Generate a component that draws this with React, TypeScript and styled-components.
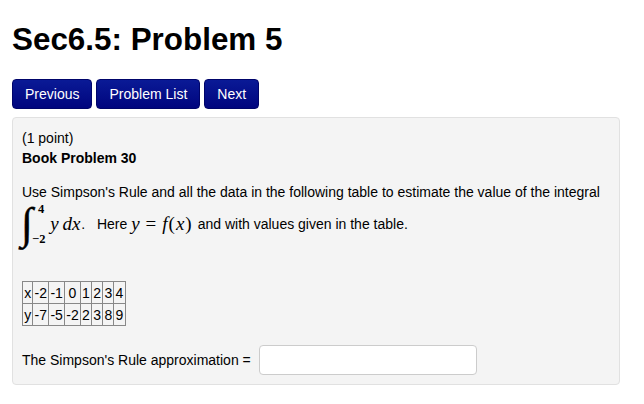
import styled, { createGlobalStyle } from "styled-components";

const GlobalStyle = createGlobalStyle`
  body {
    margin: 0;
    background: #fff;
    font-family: "Liberation Sans", Arial, sans-serif;
    color: #000;
  }
`;

const Page = styled.div`
  padding: 0 24px 0 12px;
`;

const Title = styled.h1`
  margin: 0;
  padding-top: 21px;
  font-size: 31.4px;
  line-height: 38px;
  font-weight: bold;
`;

const NavRow = styled.div`
  display: flex;
  gap: 4px;
  margin-top: 20px;
`;

const NavButton = styled.button`
  height: 30px;
  padding: 0 12px;
  border: 1px solid #00046a;
  border-radius: 4px;
  background: linear-gradient(#0a1a96, #00057e);
  color: #fff;
  font-family: "Liberation Sans", Arial, sans-serif;
  font-size: 14px;
  cursor: pointer;
`;

const ProblemPanel = styled.div`
  margin-top: 8px;
  width: 608px;
  box-sizing: border-box;
  height: 268px;
  padding: 10px 9px;
  background: #f4f4f4;
  border: 1px solid #e1e1e1;
  border-radius: 4px;
  font-size: 14px;
  line-height: 20px;
`;

const Line = styled.div<{ $bold?: boolean }>`
  font-weight: ${(p) => (p.$bold ? "bold" : "normal")};
`;

const Para = styled.p`
  margin: 14px 0 0;
`;

const MathRow = styled.div`
  display: flex;
  align-items: center;
  margin-top: -1px;
`;

const Integral = styled.span`
  display: inline-flex;
  align-items: center;
  font-family: "Liberation Serif", "DejaVu Serif", serif;
`;

const Sign = styled.span`
  font-size: 44px;
  line-height: 46px;
  font-style: italic;
  -webkit-text-stroke: 0.4px #000;
  margin-left: -1px;
`;

const Limits = styled.span`
  display: inline-flex;
  flex-direction: column;
  justify-content: space-between;
  height: 42px;
  font-size: 12.5px;
  line-height: 12px;
  font-weight: bold;
`;

const Upper = styled.span`
  margin-left: 5px;
`;

const Lower = styled.span`
  margin-left: -1px;
`;

const MathText = styled.span<{ $gap?: number }>`
  font-family: "Liberation Serif", "DejaVu Serif", serif;
  font-style: italic;
  font-size: 19px;
  margin-right: ${(p) => p.$gap ?? 0}px;
`;

const Upright = styled.span<{ $pad?: number }>`
  font-style: normal;
  padding: 0 ${(p) => p.$pad ?? 0}px;
`;

const DataTable = styled.table`
  margin-top: 34px;
  border-collapse: collapse;
  border: 1px solid #333;
  font-size: 14px;
  line-height: 16px;
  td {
    height: 22px;
    box-sizing: border-box;
    border: 1px solid #888;
    padding: 0 1.2px;
    text-align: center;
  }
`;

const AnswerRow = styled.div`
  display: flex;
  align-items: center;
  gap: 8px;
  margin-top: 19px;
`;

const AnswerInput = styled.input`
  width: 218px;
  height: 30px;
  box-sizing: border-box;
  border: 1px solid #ccc;
  border-radius: 4px;
  background: #fff;
`;

const xs = ["x", "-2", "-1", "0", "1", "2", "3", "4"];
const ys = ["y", "-7", "-5", "-2", "2", "3", "8", "9"];

export default function App() {
  return (
    <Page>
      <GlobalStyle />
      <Title>Sec6.5: Problem 5</Title>
      <NavRow>
        <NavButton>Previous</NavButton>
        <NavButton>Problem List</NavButton>
        <NavButton>Next</NavButton>
      </NavRow>
      <ProblemPanel>
        <Line>(1 point)</Line>
        <Line $bold>Book Problem 30</Line>
        <Para>
          Use Simpson's Rule and all the data in the following table to estimate the value of the integral
        </Para>
        <MathRow>
          <Integral>
            <Sign>∫</Sign>
            <Limits>
              <Upper>4</Upper>
              <Lower>−2</Lower>
            </Limits>
          </Integral>
          <MathText $gap={1}>&nbsp;y&thinsp;dx</MathText>
          <span>.&nbsp;&nbsp;&nbsp;Here&nbsp;</span>
          <MathText $gap={5}>
            y<Upright $pad={6}>=</Upright>f<Upright $pad={1}>(</Upright>x<Upright $pad={1}>)</Upright>
          </MathText>
          <span>and with values given in the table.</span>
        </MathRow>
        <DataTable>
          <tbody>
            <tr>
              {xs.map((v, i) => (
                <td key={i}>{v}</td>
              ))}
            </tr>
            <tr>
              {ys.map((v, i) => (
                <td key={i}>{v}</td>
              ))}
            </tr>
          </tbody>
        </DataTable>
        <AnswerRow>
          <span>The Simpson's Rule approximation =</span>
          <AnswerInput />
        </AnswerRow>
      </ProblemPanel>
    </Page>
  );
}
